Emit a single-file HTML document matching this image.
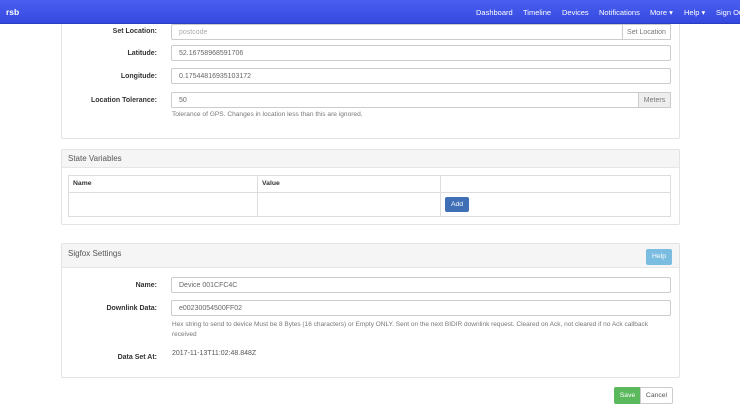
<!DOCTYPE html>
<html><head><style>
*{box-sizing:border-box;margin:0;padding:0}
body{width:740px;height:412px;background:#fff;font-family:"Liberation Sans",sans-serif;font-size:7.5px;color:#333;position:relative;overflow:hidden}
.a{position:absolute;white-space:nowrap}
.nav{left:0;top:0;width:740px;height:24px;background:linear-gradient(#4a5ff0,#3549e0);border-bottom:1px solid #2a3cc0;color:#fff;z-index:10}
.nav span{position:absolute;top:8px;font-size:7.5px;white-space:nowrap}
.panel{border:1px solid #e3e3e3;border-radius:2px;background:#fff}
.ph{background:#f5f5f5;border-bottom:1px solid #e6e6e6;color:#555;font-size:8px}
.inp{border:1px solid #ccc;border-radius:2px;height:16px;padding:4px 7px 0;color:#666;font-size:7px;background:#fff}
.lbl{text-align:right;width:120px;font-weight:bold;color:#333;font-size:7px}
.help{color:#777;font-size:6.6px}
.addon{background:#eee;border-left:1px solid #ccc;color:#777;font-size:7px;text-align:center;padding-top:4px}
</style></head><body>
<div class="a nav"><span style="left:6px;top:7px;font-weight:bold;font-size:8.5px">rsb</span>
<span style="left:476px">Dashboard</span><span style="left:523px">Timeline</span><span style="left:562px">Devices</span><span style="left:599px">Notifications</span><span style="left:650px">More ▾</span><span style="left:684px">Help ▾</span><span style="left:716px">Sign Out</span></div>

<div class="a panel" style="left:61px;top:18px;width:619px;height:121px;border-top:none"></div>
<div class="a lbl" style="left:37px;top:28px">Set Location:</div>
<div class="a inp" style="left:171px;top:24px;width:500px;color:#aaa">postcode</div>
<div class="a addon" style="left:622px;top:24px;width:49px;height:16px;background:#fff;border:1px solid #ccc">Set Location</div>
<div class="a lbl" style="left:37px;top:50px">Latitude:</div>
<div class="a inp" style="left:171px;top:45px;width:500px">52.16758968591706</div>
<div class="a lbl" style="left:37px;top:73px">Longitude:</div>
<div class="a inp" style="left:171px;top:68px;width:500px">0.17544816935103172</div>
<div class="a lbl" style="left:37px;top:97px">Location Tolerance:</div>
<div class="a inp" style="left:171px;top:92px;width:500px">50</div>
<div class="a addon" style="left:638px;top:92px;width:33px;height:16px;border:1px solid #ccc">Meters</div>
<div class="a help" style="left:172px;top:111px">Tolerance of GPS. Changes in location less than this are ignored.</div>

<div class="a panel" style="left:61px;top:149px;width:619px;height:76px"></div>
<div class="a ph" style="left:62px;top:150px;width:617px;height:18px;padding:4px 6px">State Variables</div>
<div class="a" style="left:68px;top:175px;width:603px;height:42px;border:1px solid #ddd"></div>
<div class="a" style="left:68px;top:192px;width:603px;border-top:1px solid #ddd"></div>
<div class="a" style="left:257px;top:175px;height:42px;border-left:1px solid #ddd"></div>
<div class="a" style="left:440px;top:175px;height:42px;border-left:1px solid #ddd"></div>
<div class="a" style="left:73px;top:180px;font-size:6.8px;font-weight:bold">Name</div>
<div class="a" style="left:262px;top:180px;font-size:6.8px;font-weight:bold">Value</div>
<div class="a" style="left:445px;top:197px;width:24px;height:15px;background:#3f6fb5;border-radius:2px;color:#fff;font-size:6.8px;text-align:center;padding-top:4px">Add</div>

<div class="a panel" style="left:61px;top:243px;width:619px;height:135px"></div>
<div class="a ph" style="left:62px;top:244px;width:617px;height:24px;padding:5px 6px">Sigfox Settings</div>
<div class="a" style="left:646px;top:249px;width:26px;height:16px;background:#7bbde0;border-radius:2px;color:#fff;font-size:6.8px;text-align:center;padding-top:4px">Help</div>
<div class="a lbl" style="left:37px;top:282px">Name:</div>
<div class="a inp" style="left:171px;top:277px;width:500px">Device 001CFC4C</div>
<div class="a lbl" style="left:37px;top:305px">Downlink Data:</div>
<div class="a inp" style="left:171px;top:300px;width:500px">e00230054500FF02</div>
<div class="a help" style="left:172px;top:320px;line-height:10px;font-size:6.5px">Hex string to send to device Must be 8 Bytes (16 characters) or Empty ONLY. Sent on the next BIDIR downlink request. Cleared on Ack, not cleared if no Ack callback<br>received</div>
<div class="a lbl" style="left:37px;top:354px">Data Set At:</div>
<div class="a" style="left:172px;top:350px;font-size:7px;color:#555">2017-11-13T11:02:48.848Z</div>

<div class="a" style="left:614px;top:387px;width:27px;height:17px;background:#5cb85c;border-radius:2px 0 0 2px;color:#fff;font-size:6.8px;text-align:center;padding-top:5px">Save</div>
<div class="a" style="left:640px;top:387px;width:33px;height:17px;border:1px solid #ccc;border-radius:0 2px 2px 0;color:#555;font-size:6.8px;text-align:center;padding-top:4px">Cancel</div>
</body></html>
